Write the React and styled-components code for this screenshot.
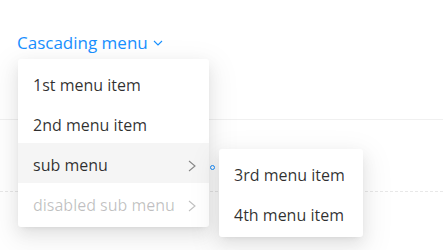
import React from "react";
import styled, { createGlobalStyle } from "styled-components";

const GlobalStyle = createGlobalStyle`
  html, body {
    margin: 0;
    padding: 0;
    background: #fff;
    font-family: "Open Sans", "Noto Sans", sans-serif;
  }
`;

// Page behind the dropdown
const Page = styled.div`
  position: relative;
  width: 443px;
  height: 250px;
  overflow: hidden;
  padding-top: 31px;
  box-sizing: border-box;
`;

const Trigger = styled.a`
  display: inline-flex;
  align-items: center;
  gap: 5px;
  margin-left: 17px;
  color: #1890ff;
  font-size: 17px;
  line-height: 24px;
  cursor: pointer;
  text-decoration: none;
`;

const SolidRule = styled.div`
  margin-top: 64px;
  height: 1px;
  background: #f0f0f0;
`;

const DashedRule = styled.div`
  margin-top: 71px;
  border-top: 1px dashed #e8e8e8;
`;

// Dropdown overlays
const Menu = styled.ul`
  position: absolute;
  left: ${(p) => p.$left}px;
  top: ${(p) => p.$top}px;
  width: ${(p) => p.$width}px;
  margin: 0;
  padding: 4px 0;
  list-style: none;
  background: #fff;
  border-radius: 3px;
  box-shadow: 0 3px 6px -4px rgba(0, 0, 0, 0.12),
    0 6px 16px 0 rgba(0, 0, 0, 0.08), 0 9px 28px 8px rgba(0, 0, 0, 0.05);
  z-index: 2;
`;

const Item = styled.li`
  display: flex;
  align-items: center;
  justify-content: space-between;
  box-sizing: border-box;
  height: 40px;
  padding: 3px 12px 0 15px;
  font-size: 16px;
  color: ${(p) => (p.$disabled ? "rgba(0,0,0,0.25)" : "rgba(0,0,0,0.82)")};
  background: ${(p) => (p.$active ? "#f5f5f5" : "transparent")};
  cursor: ${(p) => (p.$disabled ? "not-allowed" : "pointer")};
  white-space: nowrap;
`;

const Arrow = styled.svg`
  width: 10px;
  height: 12px;
  flex: none;
  margin-top: 3px;
`;

const FocusDot = styled.span`
  position: absolute;
  left: 210px;
  top: 165px;
  width: 3px;
  height: 3px;
  border: 1px solid #1890ff;
  border-radius: 50%;
  z-index: 1;
`;

const ChevronDown = () => (
  <svg width="10" height="8" viewBox="0 0 10 8">
    <path d="M1 2 L5 6 L9 2" fill="none" stroke="#1890ff" strokeWidth="1.1" />
  </svg>
);

const SubArrow = ({ color }) => (
  <Arrow viewBox="0 0 10 12">
    <path d="M2 1 L8 6 L2 11" fill="none" stroke={color} strokeWidth="1.1" />
  </Arrow>
);

export default function App() {
  return (
    <>
      <GlobalStyle />
      <Page>
        <Trigger>
          Cascading menu
          <ChevronDown />
        </Trigger>
        <SolidRule />
        <DashedRule />

        <Menu $left={18} $top={59} $width={191}>
          <Item>1st menu item</Item>
          <Item>2nd menu item</Item>
          <Item $active>
            sub menu
            <SubArrow color="rgba(0,0,0,0.45)" />
          </Item>
          <Item $disabled>
            disabled sub menu
            <SubArrow color="rgba(0,0,0,0.25)" />
          </Item>
        </Menu>

        <FocusDot />

        <Menu $left={219} $top={149} $width={144}>
          <Item>3rd menu item</Item>
          <Item>4th menu item</Item>
        </Menu>
      </Page>
    </>
  );
}
